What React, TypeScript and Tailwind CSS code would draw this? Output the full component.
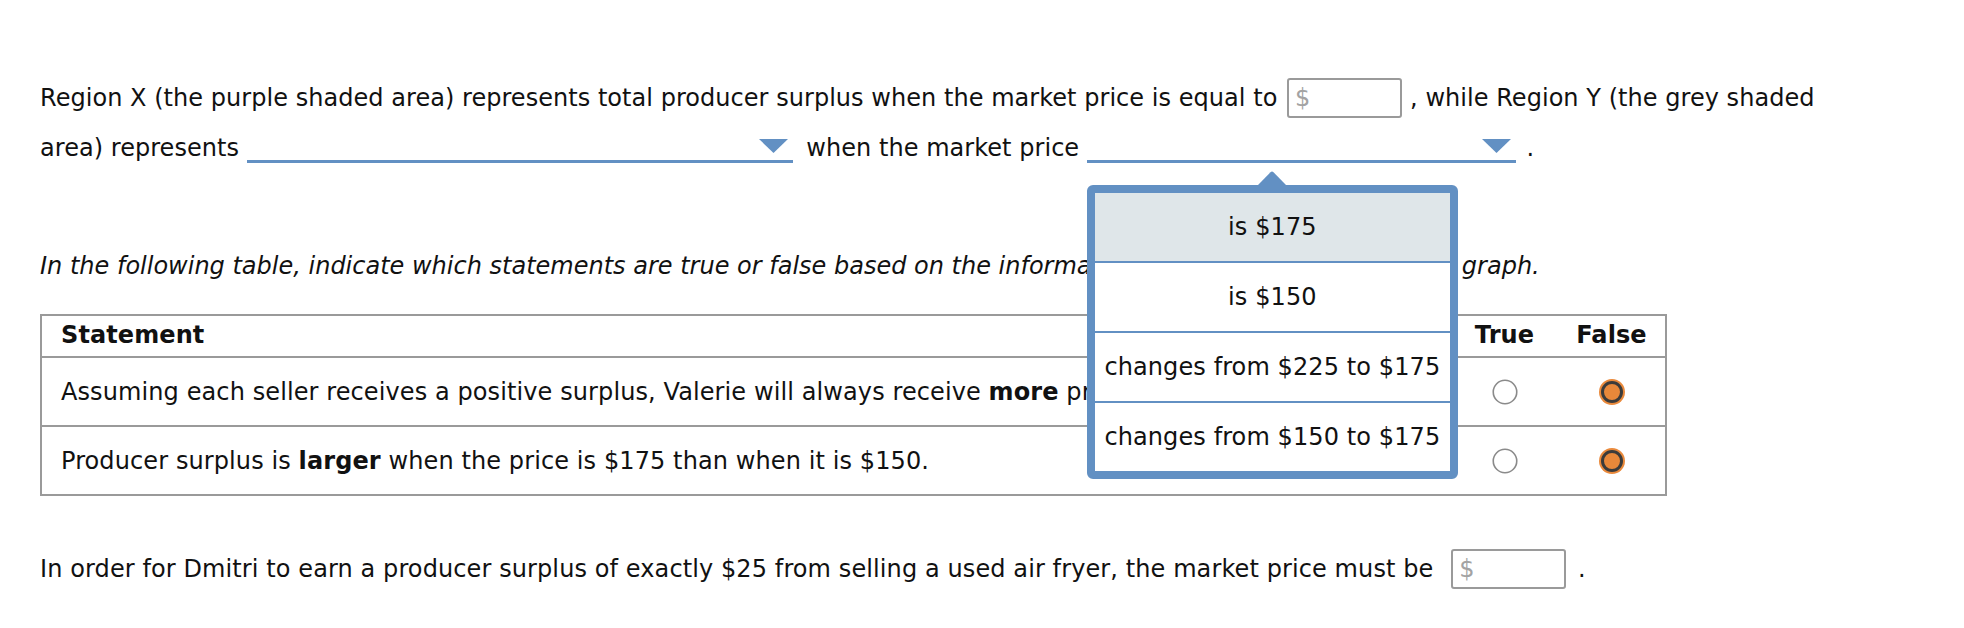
import type { ReactNode } from 'react'

const BLUE = '#6290c3'

function MoneyInput({ className = '' }: { className?: string }) {
  return (
    <span
      className={`inline-block h-[40px] w-[115px] rounded-[3px] border-2 border-[#9a9a9a] pl-[6px] leading-[36px] text-[#a3a3a3] ${className}`}
    >
      $
    </span>
  )
}

function Caret() {
  return (
    <svg className="absolute bottom-[7px] right-[5px]" width="29" height="14" viewBox="0 0 29 14">
      <path d="M0 0H29L14.5 14Z" fill={BLUE} />
    </svg>
  )
}

function Dropdown({ width, className = '', children }: { width: string; className?: string; children?: ReactNode }) {
  return (
    <span className={`relative inline-block h-[30px] border-b-[3px] border-[#6290c3] align-[-7px] ${width} ${className}`}>
      <Caret />
      {children}
    </span>
  )
}

const options = ['is $175', 'is $150', 'changes from $225 to $175', 'changes from $150 to $175']

function OptionMenu() {
  return (
    <span className="absolute left-0 top-[calc(100%+25px)] z-10 block w-[371px] rounded-[6px] border-[8px] border-[#6290c3] bg-white leading-normal tracking-[0.1px]">
      <svg className="absolute -top-[22px] left-1/2 -translate-x-1/2" width="28" height="14" viewBox="0 0 28 14">
        <path d="M0 14L12.5 1.2Q14 0 15.5 1.2L28 14Z" fill={BLUE} />
      </svg>
      {options.map((opt, i) => (
        <span
          key={opt}
          className={`flex items-center justify-center whitespace-nowrap ${
            i === 0 ? 'h-[68px] bg-[#dfe6e9]' : 'h-[70px] border-t-2 border-[#6290c3]'
          }`}
        >
          {opt}
        </span>
      ))}
    </span>
  )
}

function Radio({ checked }: { checked?: boolean }) {
  if (checked) {
    return (
      <svg width="26" height="26" viewBox="0 0 26 26">
        <circle cx="13" cy="13" r="13" fill="#ea8a3c" />
        <circle cx="13" cy="13" r="9.5" fill="#e8883a" stroke="#3b3b3b" strokeWidth="3" />
      </svg>
    )
  }
  return (
    <svg width="26" height="26" viewBox="0 0 26 26">
      <circle cx="13" cy="13" r="11.75" fill="#fff" stroke="#8a8a8a" strokeWidth="1.6" />
    </svg>
  )
}

const rows: { text: ReactNode; answer: boolean }[] = [
  {
    text: (
      <>
        Assuming each seller receives a positive surplus, Valerie will always receive <b>more</b> producer surplus than Dmitri.
      </>
    ),
    answer: false,
  },
  {
    text: (
      <>
        Producer surplus is <b>larger</b> when the price is $175 than when it is $150.
      </>
    ),
    answer: false,
  },
]

export default function App() {
  return (
    <div className="min-h-screen bg-white pl-[40px] pt-[73px] font-['DejaVu_Sans',Verdana,sans-serif] text-[24px] tracking-[0.1px] text-[#111]">
      <div className="w-[1820px] leading-[50px] tracking-[0.04px]">
        Region X (the purple shaded area) represents total producer surplus when the market price is equal to{' '}
        <MoneyInput className="ml-[2px] mr-[8px]" />, while Region Y (the grey shaded area) represents{' '}
        <Dropdown width="w-[546px]" className="mr-[6px]" /> when the market price{' '}
        <Dropdown width="w-[429px]" className="mr-[3px]">
          <OptionMenu />
        </Dropdown>{' '}
        .
      </div>

      <div className="mt-[68px] italic leading-[50px] tracking-normal">
        In the following table, indicate which statements are true or false based on the information presented in the previous graph.
      </div>

      <div className="mt-[23px] w-[1627px] border-2 border-[#9a9a9a]">
        <div className="grid h-[40px] grid-cols-[1fr_107px_107px] items-center pb-[3px] font-bold">
          <div className="pl-[19px]">Statement</div>
          <div className="text-center">True</div>
          <div className="text-center">False</div>
        </div>
        {rows.map((row, i) => (
          <div key={i} className="grid h-[69px] grid-cols-[1fr_107px_107px] items-center border-t-2 border-[#9a9a9a]">
            <div className="whitespace-nowrap pl-[19px]">{row.text}</div>
            <div className="flex justify-center">
              <Radio checked={row.answer} />
            </div>
            <div className="flex justify-center">
              <Radio checked={!row.answer} />
            </div>
          </div>
        ))}
      </div>

      <div className="mt-[48px] leading-[50px]">
        In order for Dmitri to earn a producer surplus of exactly $25 from selling a used air fryer, the market price must be{' '}
        <MoneyInput className="ml-[10px] mr-[4px]" /> .
      </div>
    </div>
  )
}
